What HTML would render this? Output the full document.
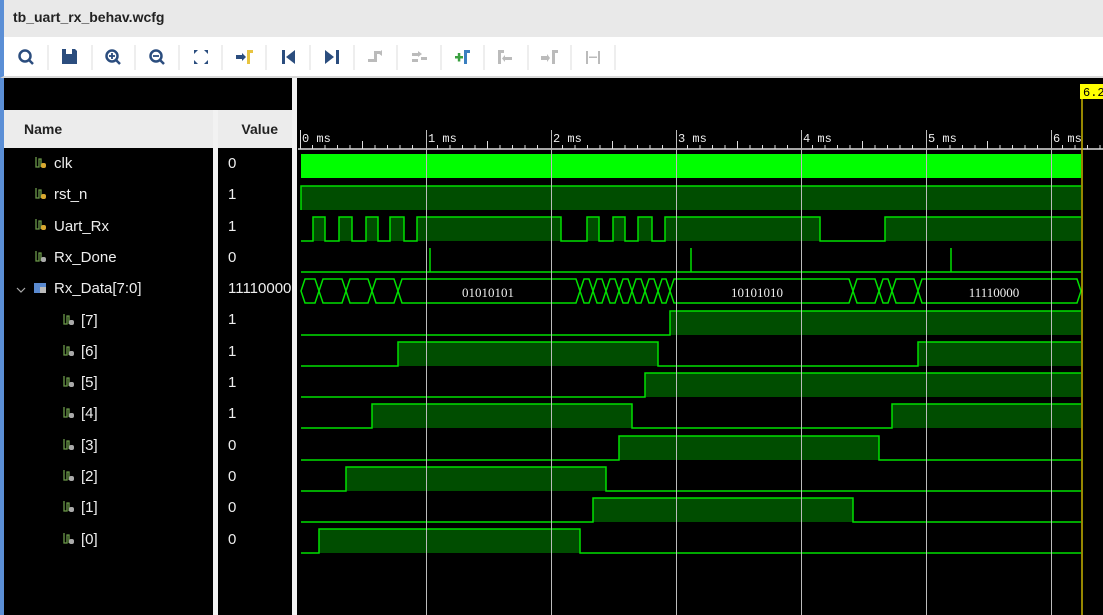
<!DOCTYPE html>
<html><head><meta charset="utf-8"><style>
*{margin:0;padding:0;box-sizing:border-box}
body{width:1103px;height:615px;overflow:hidden;background:#000;position:relative;font-family:"Liberation Sans",sans-serif}
.abs{position:absolute}
.title{left:0;top:0;width:1103px;height:37px;background:#e9e9e9;border-left:4px solid #5b8fd6}
.title span{position:absolute;left:9px;top:9px;font-size:14px;font-weight:bold;color:#222}
.tb{left:0;top:37px;width:1103px;height:41px;background:#fff;border-left:4px solid #5b8fd6;border-bottom:2px solid #d8d8d8}
.lb{left:0;top:78px;width:4px;height:537px;background:#5b8fd6}
.hdr{top:110px;height:38px;background:#ececec;font-size:14px;font-weight:bold;color:#222;line-height:38px}
</style></head><body>
<div class="abs title"><span>tb_uart_rx_behav.wcfg</span></div>
<div class="abs tb">
<svg width="1103" height="41" style="position:absolute;left:-4px;top:0">
<g stroke="#ddd" stroke-width="1">
<line x1="48" y1="8" x2="48" y2="33"/><line x1="92" y1="8" x2="92" y2="33"/><line x1="135" y1="8" x2="135" y2="33"/><line x1="179" y1="8" x2="179" y2="33"/><line x1="222" y1="8" x2="222" y2="33"/><line x1="266" y1="8" x2="266" y2="33"/><line x1="310" y1="8" x2="310" y2="33"/><line x1="354" y1="8" x2="354" y2="33"/><line x1="397" y1="8" x2="397" y2="33"/><line x1="441" y1="8" x2="441" y2="33"/><line x1="484" y1="8" x2="484" y2="33"/><line x1="528" y1="8" x2="528" y2="33"/><line x1="571" y1="8" x2="571" y2="33"/><line x1="615" y1="8" x2="615" y2="33"/>
</g>
<g fill="none" stroke="#2b4d7e" stroke-width="2.5">
<circle cx="25" cy="19" r="5.5"/><line x1="29" y1="23" x2="33" y2="27"/>
<circle cx="112" cy="19" r="5.5"/><line x1="116" y1="23" x2="120" y2="27"/>
<circle cx="156" cy="19" r="5.5"/><line x1="160" y1="23" x2="164" y2="27"/>
</g>
<g stroke="#2b4d7e" stroke-width="1.8"><line x1="109" y1="19" x2="115" y2="19"/><line x1="112" y1="16" x2="112" y2="22"/><line x1="153" y1="19" x2="159" y2="19"/></g>
<path d="M62 12h13l2 2v13h-15z" fill="#2b4d7e"/><rect x="66" y="12" width="6" height="5" fill="#fff"/>
<g fill="#2b4d7e"><path d="M194 13h4l-4 4z M208 13h-4l4 4z M194 27h4l-4-4z M208 27h-4l4-4z"/>
<rect x="236" y="18" width="6" height="4"/><path d="M242 16l4 4-4 4z"/>
<rect x="282" y="13" width="3" height="14"/><path d="M295 13v14l-9-7z"/>
<rect x="336" y="13" width="3" height="14"/><path d="M325 13v14l9-7z"/></g>
<rect x="247" y="13" width="3" height="14" fill="#e8c440"/><rect x="247" y="13" width="6" height="3" fill="#e8c440"/>
<g fill="#bbb"><path d="M368 22h6v-8h6v3h-3v8h-9z"/><path d="M378 16l4-3v6z"/>
<path d="M412 16h6v3h-6z M418 14l4 3-4 3z M412 22h6v3h-6z M421 20h6v3h-6z"/>
<rect x="498" y="13" width="3" height="14"/><rect x="498" y="13" width="6" height="3"/><path d="M505 20h7v3h-7z M505 18l-3 3.5 3 3.5z"/>
<path d="M541 19h6v4h-6z M547 17l3 4-3 4z"/><rect x="552" y="13" width="3" height="14"/><rect x="552" y="13" width="6" height="3"/>
<rect x="586" y="14" width="2" height="13"/><rect x="598" y="14" width="2" height="13"/><rect x="589" y="19.5" width="8" height="1.5"/></g>
<g fill="#3aa040"><rect x="455" y="19" width="8" height="2.5"/><rect x="457.8" y="16" width="2.5" height="8.5"/></g>
<g fill="#3a7fc0"><rect x="464" y="13" width="3" height="14"/><rect x="464" y="13" width="6" height="3"/></g>
</svg></div>
<div class="abs lb"></div>
<div class="abs" style="left:213px;top:110px;width:5px;height:505px;background:#f2f2f2"></div>
<div class="abs" style="left:292px;top:78px;width:5px;height:537px;background:#f2f2f2"></div>
<div class="abs hdr" style="left:4px;width:209px;padding-left:20px">Name</div>
<div class="abs hdr" style="left:218px;width:74px;text-align:right;padding-right:14px">Value</div>
<div class="abs" style="left:4px;top:148px;width:287px;height:467px">
<svg width="210" height="467" style="position:absolute;left:0;top:0">
<defs><g id="i1"><path d="M0 0v10h3V2h2v8" fill="none" stroke="#6c9a4a" stroke-width="1.3"/><rect x="5" y="6" width="5" height="5" rx="2" fill="#d8a830"/></g>
<g id="i2"><path d="M0 0v10h3V2h2v8" fill="none" stroke="#6c9a4a" stroke-width="1.3"/><rect x="5" y="6" width="5" height="5" rx="2" fill="#aaa"/></g></defs>
<use href="#i1" x="32" y="9"/><use href="#i1" x="32" y="40"/><use href="#i1" x="32" y="71"/><use href="#i2" x="32" y="103"/>
<path d="M13 140l4 4 4-4" fill="none" stroke="#aaa" stroke-width="1.2"/>
<rect x="30" y="135" width="12" height="10" fill="#5a8ad0"/><rect x="36" y="139" width="6" height="6" fill="#bbb"/>
<use href="#i2" x="60" y="166"/><use href="#i2" x="60" y="197"/><use href="#i2" x="60" y="228"/><use href="#i2" x="60" y="259"/><use href="#i2" x="60" y="291"/><use href="#i2" x="60" y="322"/><use href="#i2" x="60" y="353"/><use href="#i2" x="60" y="385"/>
</svg>
</div>
<div style="position:absolute;left:0;top:148px;font-size:15px;color:#eee;line-height:31.3px;width:293px">
<div style="position:absolute;left:54px;top:0;white-space:nowrap">clk<br>rst_n<br>Uart_Rx<br>Rx_Done<br>Rx_Data[7:0]</div>
<div style="position:absolute;left:81px;top:156.5px;white-space:nowrap">[7]<br>[6]<br>[5]<br>[4]<br>[3]<br>[2]<br>[1]<br>[0]</div>
<div style="position:absolute;left:228px;top:0;width:64px;overflow:hidden;white-space:nowrap">0<br>1<br>1<br>0<br>11110000<br>1<br>1<br>1<br>1<br>0<br>0<br>0<br>0</div>
</div>
<svg class="abs" style="left:0;top:0" width="1103" height="615">
<g stroke="#ddd" stroke-width="1.5">
<line x1="298" y1="149" x2="1103" y2="149"/>
</g>
<g stroke="#ddd" stroke-width="1">
<path d="M312.5 149v-4M325 149v-4M337.5 149v-4M350 149v-4M375 149v-4M387.5 149v-4M400 149v-4M412.5 149v-4M362.5 149v-8
M437.5 149v-4M450 149v-4M462.5 149v-4M475 149v-4M500 149v-4M512.5 149v-4M525 149v-4M537.5 149v-4M487.5 149v-8
M562.5 149v-4M575 149v-4M587.5 149v-4M600 149v-4M625 149v-4M637.5 149v-4M650 149v-4M662.5 149v-4M612.5 149v-8
M687.5 149v-4M700 149v-4M712.5 149v-4M725 149v-4M750 149v-4M762.5 149v-4M775 149v-4M787.5 149v-4M737.5 149v-8
M812.5 149v-4M825 149v-4M837.5 149v-4M850 149v-4M875 149v-4M887.5 149v-4M900 149v-4M912.5 149v-4M862.5 149v-8
M937.5 149v-4M950 149v-4M962.5 149v-4M975 149v-4M1000 149v-4M1012.5 149v-4M1025 149v-4M1037.5 149v-4M987.5 149v-8
M1062.5 149v-4M1075 149v-4M1087.5 149v-4M1100 149v-4"/>
<line x1="300.5" y1="130" x2="300.5" y2="149"/>
</g>
<g font-family="Liberation Mono,monospace" font-size="12" fill="#eee">
<text x="302" y="142">0 ms</text><text x="428" y="142">1 ms</text><text x="553" y="142">2 ms</text><text x="678" y="142">3 ms</text><text x="803" y="142">4 ms</text><text x="928" y="142">5 ms</text><text x="1053" y="142">6 ms</text>
</g>
<g fill="#004d00">
<rect x="301" y="186" width="780" height="24"/>
<path d="M313 217h12v24h-12zM339 217h13v24h-13zM366 217h12v24h-12zM390 217h14v24h-14zM417 217h144v24h-144zM587 217h12v24h-12zM613 217h12v24h-12zM638 217h14v24h-14zM665 217h155v24h-155zM885 217h196v24h-196z"/>
<rect x="670" y="311" width="411" height="24"/>
<path d="M398 342h260v24h-260zM918 342h163v24h-163z"/>
<rect x="645" y="373" width="436" height="24"/>
<path d="M372 404h260v24h-260zM892 404h189v24h-189z"/>
<rect x="619" y="436" width="260" height="24"/>
<rect x="346" y="467" width="260" height="24"/>
<rect x="593" y="498" width="260" height="24"/>
<rect x="319" y="529" width="261" height="24"/>
</g>
<rect x="301" y="154" width="780" height="24" fill="#00ff00"/>
<g fill="none" stroke="#00e000" stroke-width="1.5">
<path d="M301 210V186H1081"/>
<path d="M301 241H313V217H325V241H339V217H352V241H366V217H378V241H390V217H404V241H417V217H561V241H587V217H599V241H613V217H625V241H638V217H652V241H665V217H820V241H885V217H1081"/>
<path d="M301 272H430V248V272H691V248V272H951V248V272H1081"/>
<path d="M301 335H670V311H1081"/>
<path d="M301 366H398V342H658V366H918V342H1081"/>
<path d="M301 397H645V373H1081"/>
<path d="M301 428H372V404H632V428H892V404H1081"/>
<path d="M301 460H619V436H879V460H1081"/>
<path d="M301 491H346V467H606V491H1081"/>
<path d="M301 522H593V498H853V522H1081"/>
<path d="M301 553H319V529H580V553H1081"/>
<path d="M301 291L305 279H315L323 303H342L350 279H368L376 303H394L402 279H576L584 303H589L597 279H602L610 303H615L623 279H628L636 303H641L649 279H654L662 303H666L674 279H849L857 303H875L883 279H888L896 303H914L922 279H1077L1081 291L1077 303H922L914 279H896L888 303H883L875 279H857L849 303H674L666 279H662L654 303H649L641 279H636L628 303H623L615 279H610L602 303H597L589 279H584L576 303H402L394 279H376L368 303H350L342 279H323L315 303H305Z"/>
</g>
<g font-family="Liberation Serif,serif" font-size="13" fill="#eee" text-anchor="middle">
<text x="488" y="297">01010101</text><text x="757" y="297">10101010</text><text x="994" y="297">11110000</text>
</g>
<g stroke="#bbb" stroke-width="1">
<line x1="426.5" y1="130" x2="426.5" y2="615"/><line x1="551.5" y1="130" x2="551.5" y2="615"/><line x1="676.5" y1="130" x2="676.5" y2="615"/><line x1="801.5" y1="130" x2="801.5" y2="615"/><line x1="926.5" y1="130" x2="926.5" y2="615"/><line x1="1051.5" y1="130" x2="1051.5" y2="615"/>
</g>
<line x1="1082" y1="98" x2="1082" y2="615" stroke="#c8b400" stroke-width="1.5"/>
<rect x="1080" y="84" width="23" height="15" fill="#ffff00"/>
<text x="1083" y="96" font-family="Liberation Mono,monospace" font-size="12" fill="#000">6.2</text>
</svg>
</body></html>
